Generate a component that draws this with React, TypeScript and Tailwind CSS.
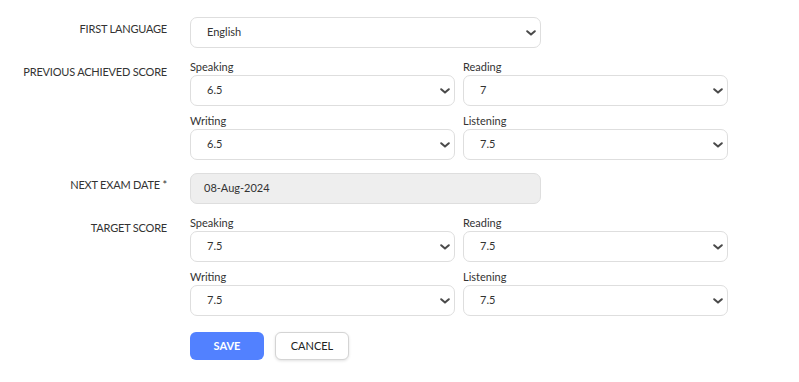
import React from "react";

function Chevron() {
  return (
    <svg width="10" height="6" viewBox="0 0 10 6" className="shrink-0">
      <polyline points="1.2,1.2 5,4.6 8.8,1.2" fill="none" stroke="#4a4a4a" strokeWidth="2" strokeLinecap="round" strokeLinejoin="round" />
    </svg>
  );
}

function SelectBox({ value, wide }: { value: string; wide?: boolean }) {
  return (
    <div
      className={`h-[31px] ${wide ? "w-[351px]" : "w-[265px]"} flex items-center justify-between pl-4 pr-[4px] bg-white border border-[#dedede] rounded-[7px] text-[11px] text-[#333]`}
    >
      <span>{value}</span>
      <Chevron />
    </div>
  );
}

function Field({ label, value }: { label: string; value: string }) {
  return (
    <div className="flex flex-col">
      <span className="h-[14px] leading-[14px] text-[11px] text-[#333] mb-px">{label}</span>
      <SelectBox value={value} />
    </div>
  );
}

function ScoreGroup({ scores }: { scores: [string, string, string, string] }) {
  return (
    <div className="grid grid-cols-[265px_265px] gap-x-2 gap-y-2">
      <Field label="Speaking" value={scores[0]} />
      <Field label="Reading" value={scores[1]} />
      <Field label="Writing" value={scores[2]} />
      <Field label="Listening" value={scores[3]} />
    </div>
  );
}

function RowLabel({ children, pt }: { children: React.ReactNode; pt: string }) {
  return (
    <div className={`w-[167px] shrink-0 text-right text-[11px] leading-4 text-[#333] tracking-[-0.2px] ${pt}`}>
      {children}
    </div>
  );
}

export default function App() {
  return (
    <div className="w-[799px] h-[382px] bg-white pt-[17px]" style={{ fontFamily: "Lato, 'Noto Sans', sans-serif" }}>
      <div className="flex flex-col gap-3">
        <div className="flex gap-[23px]">
          <RowLabel pt="pt-1">FIRST LANGUAGE</RowLabel>
          <SelectBox value="English" wide />
        </div>

        <div className="flex gap-[23px]">
          <RowLabel pt="pt-1">PREVIOUS ACHIEVED SCORE</RowLabel>
          <ScoreGroup scores={["6.5", "7", "6.5", "7.5"]} />
        </div>

        <div className="flex gap-[23px] mt-px">
          <RowLabel pt="pt-1">NEXT EXAM DATE *</RowLabel>
          <div className="h-[31px] w-[351px] flex items-center pl-[13px] bg-[#eeeeee] border border-[#dedede] rounded-[7px] text-[11px] text-[#333]">
            08-Aug-2024
          </div>
        </div>

        <div className="flex gap-[23px]">
          <RowLabel pt="pt-1">TARGET SCORE</RowLabel>
          <ScoreGroup scores={["7.5", "7.5", "7.5", "7.5"]} />
        </div>

        <div className="flex gap-[11px] pl-[190px] mt-1">
          <button className="h-[28px] w-[74px] rounded-[6px] bg-[#5281ff] text-white text-[11px] font-bold">
            SAVE
          </button>
          <button className="h-[28px] w-[74px] rounded-[6px] bg-white border border-[#d4d4d4] text-[#222] text-[11px] shadow-[0_1px_3px_rgba(0,0,0,0.12)]">
            CANCEL
          </button>
        </div>
      </div>
    </div>
  );
}
